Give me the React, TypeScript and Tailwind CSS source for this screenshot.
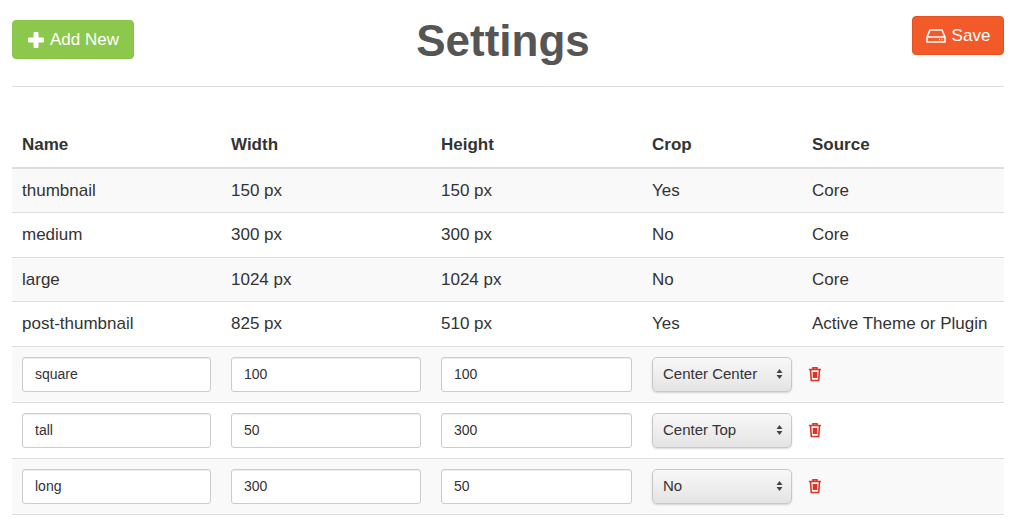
import React from "react";

const rows = [
  ["thumbnail", "150 px", "150 px", "Yes", "Core"],
  ["medium", "300 px", "300 px", "No", "Core"],
  ["large", "1024 px", "1024 px", "No", "Core"],
  ["post-thumbnail", "825 px", "510 px", "Yes", "Active Theme or Plugin"],
];
const edits = [
  ["square", "100", "100", "Center Center"],
  ["tall", "50", "300", "Center Top"],
  ["long", "300", "50", "No"],
];

const Trash = () => (
  <svg width="14" height="16" viewBox="0 0 14 16" fill="none" stroke="#d9362b" strokeWidth="1.6">
    <path d="M1 3.5h12M5 3.5V1.8h4v1.7M2.5 3.5l.8 11h7.4l.8-11M5.5 6v6M7 6v6M8.5 6v6" />
  </svg>
);

export default function App() {
  const f = { fontFamily: '"Helvetica Neue", "Liberation Sans", Arial, sans-serif' };
  return (
    <div style={f} className="w-[1020px] h-[532px] bg-white text-[#333] overflow-hidden">
      <div className="mx-[12px] w-[992px]">
        <div className="flex items-start justify-between h-[87px] border-b border-[#ddd]">
          <button className="mt-[20px] h-[39px] w-[122px] rounded-[4px] bg-[#8cc84b] border border-[#86c444] text-white text-[17px] flex items-center justify-center gap-[5px]">
            <svg width="18" height="18" viewBox="0 0 18 18"><path d="M7 1.5h4v5.5h5.5v4H11v5.5H7V11H1.5V7H7z" fill="white" strokeLinejoin="round" stroke="white" strokeWidth="1"/></svg>
            Add New
          </button>
          <h1 className="mt-[15px] text-[44px] font-bold text-[#555] leading-[52px] mr-[40px]">Settings</h1>
          <button className="mt-[16px] h-[39px] w-[92px] rounded-[4px] bg-[#f25a29] border border-[#e5501f] text-white text-[17px] flex items-center justify-center gap-[6px]">
            <svg width="20" height="16" viewBox="0 0 20 16" fill="none" stroke="white" strokeWidth="1.5">
              <path d="M4 2h12l3 7v5H1V9z M1 9h18" /><path d="M13 11.5h1M15.5 11.5h1" />
            </svg>
            Save
          </button>
        </div>
        <table className="w-full mt-[36px] text-[17px] border-collapse">
          <thead>
            <tr className="h-[45px] border-b-2 border-[#ddd] text-left">
              {["Name", "Width", "Height", "Crop", "Source"].map((h, i) => (
                <th key={h} className={`font-bold px-[10px] ${["w-[209px]","w-[210px]","w-[211px]","w-[160px]",""][i]}`}>{h}</th>
              ))}
            </tr>
          </thead>
          <tbody>
            {rows.map((r, i) => (
              <tr key={i} className={`h-[44.5px] border-b border-[#ddd] ${i % 2 === 0 ? "bg-[#f9f9f9]" : ""}`}>
                {r.map((c, j) => <td key={j} className="px-[10px]">{c}</td>)}
              </tr>
            ))}
            {edits.map((r, i) => (
              <tr key={i} className={`h-[56px] border-b border-[#ddd] ${i % 2 === 0 ? "bg-[#f9f9f9]" : ""}`}>
                {r.slice(0, 3).map((c, j) => (
                  <td key={j} className="px-[10px]">
                    <input readOnly value={c} className={`h-[35px] ${j === 0 ? "w-[189px]" : j === 1 ? "w-[190px]" : "w-[191px]"} border border-[#ccc] rounded-[3px] bg-white px-[12px] text-[14px] text-[#333] shadow-[inset_0_1px_1px_rgba(0,0,0,0.075)]`} />
                  </td>
                ))}
                <td className="px-[10px]">
                  <div className="h-[35px] w-[140px] rounded-[5px] border border-[#c8c8c8] bg-gradient-to-b from-[#f8f8f8] to-[#e4e4e4] shadow-[0_1px_2px_rgba(0,0,0,0.15)] flex items-center justify-between pl-[10px] pr-[8px] text-[15px] text-[#333]">
                    <span>{r[3]}</span>
                    <svg width="7" height="12" viewBox="0 0 7 12"><path d="M3.5 1L6.5 5H0.5z M3.5 11L0.5 7h6z" fill="#444"/></svg>
                  </div>
                </td>
                <td className="px-[6px]"><Trash /></td>
              </tr>
            ))}
          </tbody>
        </table>
      </div>
    </div>
  );
}
